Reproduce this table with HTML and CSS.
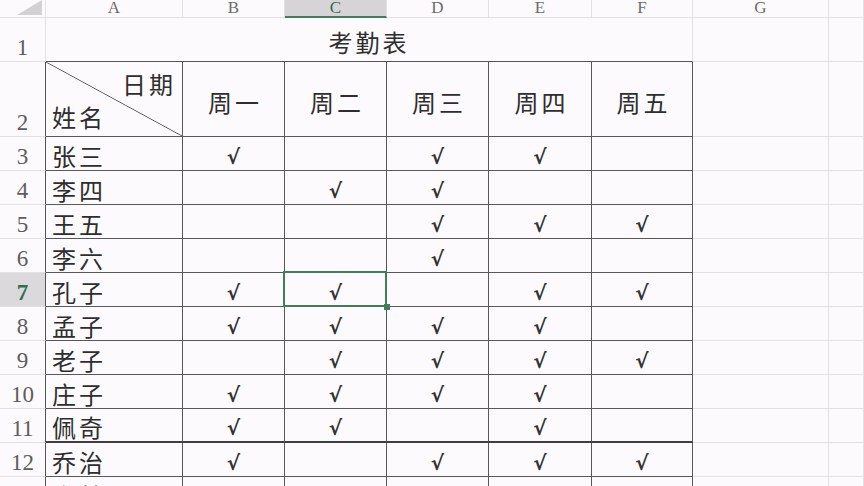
FILE: index.html
```html
<!DOCTYPE html>
<html lang="zh">
<head>
<meta charset="utf-8">
<title>考勤表</title>
<link rel="stylesheet" href="styles.css">
</head>
<body>
<div class="sheet">
  <!-- column headers -->
  <div class="corner"><span class="tri"></span></div>
  <div class="ch">A</div>
  <div class="ch">B</div>
  <div class="ch sel">C</div>
  <div class="ch">D</div>
  <div class="ch">E</div>
  <div class="ch">F</div>
  <div class="ch">G</div>
  <div class="ch"></div>

  <!-- row 1 -->
  <div class="rh">1</div>
  <div class="title">考勤表</div>
  <div class="c top"></div>
  <div class="c top"></div>

  <!-- row 2 -->
  <div class="rh edge">2</div>
  <div class="t diag"><span class="d-top">日期</span><span class="d-bot">姓名</span></div>
  <div class="t day">周一</div>
  <div class="t day">周二</div>
  <div class="t day">周三</div>
  <div class="t day">周四</div>
  <div class="t day">周五</div>
  <div class="c"></div>
  <div class="c"></div>

  <!-- row 3 -->
  <div class="rh edge">3</div>
  <div class="t name">张三</div>
  <div class="t ck">√</div>
  <div class="t ck"></div>
  <div class="t ck">√</div>
  <div class="t ck">√</div>
  <div class="t ck"></div>
  <div class="c"></div>
  <div class="c"></div>

  <!-- row 4 -->
  <div class="rh edge">4</div>
  <div class="t name">李四</div>
  <div class="t ck"></div>
  <div class="t ck">√</div>
  <div class="t ck">√</div>
  <div class="t ck"></div>
  <div class="t ck"></div>
  <div class="c"></div>
  <div class="c"></div>

  <!-- row 5 -->
  <div class="rh edge">5</div>
  <div class="t name">王五</div>
  <div class="t ck"></div>
  <div class="t ck"></div>
  <div class="t ck">√</div>
  <div class="t ck">√</div>
  <div class="t ck">√</div>
  <div class="c"></div>
  <div class="c"></div>

  <!-- row 6 -->
  <div class="rh edge">6</div>
  <div class="t name">李六</div>
  <div class="t ck"></div>
  <div class="t ck"></div>
  <div class="t ck">√</div>
  <div class="t ck"></div>
  <div class="t ck"></div>
  <div class="c"></div>
  <div class="c"></div>

  <!-- row 7 -->
  <div class="rh edge sel">7</div>
  <div class="t name">孔子</div>
  <div class="t ck">√</div>
  <div class="t ck active">√</div>
  <div class="t ck"></div>
  <div class="t ck">√</div>
  <div class="t ck">√</div>
  <div class="c"></div>
  <div class="c"></div>

  <!-- row 8 -->
  <div class="rh edge">8</div>
  <div class="t name">孟子</div>
  <div class="t ck">√</div>
  <div class="t ck">√</div>
  <div class="t ck">√</div>
  <div class="t ck">√</div>
  <div class="t ck"></div>
  <div class="c"></div>
  <div class="c"></div>

  <!-- row 9 -->
  <div class="rh edge">9</div>
  <div class="t name">老子</div>
  <div class="t ck"></div>
  <div class="t ck">√</div>
  <div class="t ck">√</div>
  <div class="t ck">√</div>
  <div class="t ck">√</div>
  <div class="c"></div>
  <div class="c"></div>

  <!-- row 10 -->
  <div class="rh edge">10</div>
  <div class="t name">庄子</div>
  <div class="t ck">√</div>
  <div class="t ck">√</div>
  <div class="t ck">√</div>
  <div class="t ck">√</div>
  <div class="t ck"></div>
  <div class="c"></div>
  <div class="c"></div>

  <!-- row 11 -->
  <div class="rh edge">11</div>
  <div class="t name heavy">佩奇</div>
  <div class="t ck heavy">√</div>
  <div class="t ck heavy">√</div>
  <div class="t ck heavy"></div>
  <div class="t ck heavy">√</div>
  <div class="t ck heavy"></div>
  <div class="c"></div>
  <div class="c"></div>

  <!-- row 12 -->
  <div class="rh edge">12</div>
  <div class="t name">乔治</div>
  <div class="t ck">√</div>
  <div class="t ck"></div>
  <div class="t ck">√</div>
  <div class="t ck">√</div>
  <div class="t ck">√</div>
  <div class="c"></div>
  <div class="c"></div>

  <!-- row 13 -->
  <div class="rh edge">13</div>
  <div class="t name">宋林昊</div>
  <div class="t ck"></div>
  <div class="t ck">√</div>
  <div class="t ck"></div>
  <div class="t ck">√</div>
  <div class="t ck"></div>
  <div class="c"></div>
  <div class="c"></div>
</div>
</body>
</html>
```

FILE: styles.css
```css
* { box-sizing: border-box; }

html, body {
  margin: 0;
  padding: 0;
  width: 864px;
  height: 486px;
  overflow: hidden;
  background: #fcfafc;
}

.sheet {
  display: grid;
  grid-template-columns: 46px 137px 102px 102px 102px 103px 101px 136px 1fr;
  grid-template-rows: 18px 44px 75px repeat(11, 34px);
  width: 864px;
  font-family: "Noto Sans CJK SC", "Noto Sans", sans-serif;
  color: #2e2e2e;
}

.sheet > div {
  position: relative;
  border-right: 1px solid #e3dfe3;
  border-bottom: 1px solid #e3dfe3;
}

/* headers */
.corner {
  display: flex;
  justify-content: flex-end;
  align-items: flex-start;
  padding-right: 3px;
}
.tri {
  width: 0;
  height: 0;
  border-left: 25px solid transparent;
  border-bottom: 15px solid #d4d1d4;
}

.ch {
  display: flex;
  justify-content: center;
  align-items: center;
  font-family: "Liberation Serif", serif;
  font-size: 17px;
  line-height: 16px;
  color: #6c6c6c;
  padding-bottom: 1px;
}
.ch.sel {
  background: #d7d4d7;
  color: #2f6f4f;
  border-bottom: 2px solid #3f7d5d;
  padding-bottom: 0;
}

.rh {
  display: flex;
  justify-content: center;
  align-items: flex-end;
  padding-bottom: 2px;
  font-family: "Liberation Serif", serif;
  font-size: 23px;
  line-height: 1;
  color: #5d5d5d;
}
.rh.edge { border-right-color: #555; }
.rh.sel {
  background: #dcd9dc;
  color: #2f6f4f;
  font-weight: bold;
}

/* title row */
.title {
  grid-column: span 6;
  display: flex;
  justify-content: center;
  align-items: flex-end;
  padding-bottom: 4px;
  font-size: 24px;
  line-height: 1.2;
  letter-spacing: 3px;
  border-bottom-color: #555 !important;
}

/* table cells */
.sheet > .t {
  border-right: 1px solid #585858;
  border-bottom: 1px solid #585858;
}
.sheet > .t.heavy { border-bottom: 2px solid #3e3e3e; }

.day {
  display: flex;
  justify-content: center;
  align-items: center;
  padding-top: 4px;
  font-size: 24px;
  letter-spacing: 3px;
  padding-left: 3px;
}

.name {
  display: flex;
  align-items: center;
  padding-left: 6px;
  padding-top: 4px;
  font-size: 24px;
  letter-spacing: 3px;
  line-height: 1;
}

.ck {
  display: flex;
  justify-content: center;
  align-items: center;
  padding-top: 6px;
  font-family: "DejaVu Sans", sans-serif;
  font-size: 20px;
  font-weight: bold;
  line-height: 1;
  color: #333;
}

.diag {
  background: linear-gradient(to top right, transparent calc(50% - 0.8px), #555 50%, transparent calc(50% + 0.8px));
  display: flex;
  flex-direction: column;
  justify-content: space-between;
  padding: 8px 6px 4px 6px;
  font-size: 24px;
  letter-spacing: 3px;
  line-height: 1.2;
}
.d-top { align-self: flex-end; }
.d-bot { align-self: flex-start; }

/* active cell */
.active::after {
  content: "";
  position: absolute;
  left: -2px;
  top: -2px;
  right: -1px;
  bottom: -1px;
  border: 2px solid #3f7d5d;
}
.active::before {
  content: "";
  position: absolute;
  right: -4px;
  bottom: -4px;
  width: 6px;
  height: 6px;
  background: #3f7d5d;
  z-index: 2;
}
```
